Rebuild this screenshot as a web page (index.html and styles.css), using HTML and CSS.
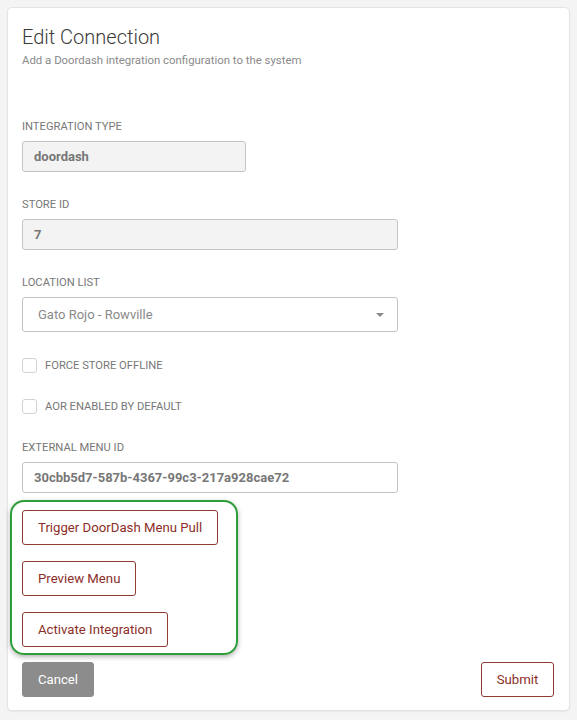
FILE: index.html
```html
<!DOCTYPE html>
<html>
<head>
<meta charset="utf-8">
<link rel="stylesheet" href="styles.css">
</head>
<body>
<div class="card">
  <h1 class="title">Edit Connection</h1>
  <p class="subtitle">Add a Doordash integration configuration to the system</p>

  <div class="field first">
    <label class="label">INTEGRATION TYPE</label>
    <div class="input readonly short">doordash</div>
  </div>

  <div class="field">
    <label class="label">STORE ID</label>
    <div class="input readonly">7</div>
  </div>

  <div class="field">
    <label class="label">LOCATION LIST</label>
    <div class="select"><span>Gato Rojo - Rowville</span><span class="caret"></span></div>
  </div>

  <div class="check"><span class="box"></span><span class="check-label">FORCE STORE OFFLINE</span></div>
  <div class="check"><span class="box"></span><span class="check-label">AOR ENABLED BY DEFAULT</span></div>

  <div class="field last">
    <label class="label">EXTERNAL MENU ID</label>
    <div class="input">30cbb5d7-587b-4367-99c3-217a928cae72</div>
  </div>

  <div class="highlight">
    <button class="btn-outline">Trigger DoorDash Menu Pull</button>
    <button class="btn-outline">Preview Menu</button>
    <button class="btn-outline">Activate Integration</button>
  </div>

  <div class="actions">
    <button class="btn-cancel">Cancel</button>
    <button class="btn-outline btn-submit">Submit</button>
  </div>
</div>
</body>
</html>
```

FILE: styles.css
```css
* { box-sizing: border-box; }
html, body { margin: 0; padding: 0; }
body {
  background: #f4f4f4;
  padding: 7px;
  font-family: Roboto, "Liberation Sans", Arial, sans-serif;
}
.card {
  width: 563px;
  height: 704px;
  background: #fff;
  border: 1px solid #e4e4e4;
  border-radius: 5px;
  box-shadow: 0 1px 2px rgba(0,0,0,0.06);
  padding: 17px 15px 15px 14px;
  display: flex;
  flex-direction: column;
}
.title {
  margin: 0;
  font-size: 20px;
  line-height: 24px;
  font-weight: 300;
  color: #3a3a3a;
}
.subtitle {
  margin: 4px 0 0 0;
  font-size: 11.4px;
  line-height: 14px;
  color: #8a8a8a;
}
.field { display: flex; flex-direction: column; margin-top: 26px; }
.field.first { margin-top: 53px; }
.field.last { margin-top: 27px; }
.label {
  font-size: 11.2px;
  line-height: 14px;
  color: #777;
  margin-bottom: 7px;
}
.input {
  width: 376px;
  height: 31px;
  border: 1px solid #c4c4c4;
  border-radius: 3px;
  padding: 0 11px;
  display: flex;
  align-items: center;
  font-size: 13px;
  font-weight: 700;
  color: #777;
  background: #fff;
}
.input.readonly { background: #f3f3f3; }
.input.short { width: 224px; }
.select {
  width: 376px;
  height: 35px;
  border: 1px solid #c4c4c4;
  border-radius: 3px;
  padding: 0 15px;
  display: flex;
  align-items: center;
  justify-content: space-between;
  font-size: 13px;
  color: #8a8a8a;
}
.caret {
  width: 0; height: 0;
  border-left: 4px solid transparent;
  border-right: 4px solid transparent;
  border-top: 4px solid #8a8a8a;
  margin-right: -2px;
}
.check {
  display: flex;
  align-items: center;
  gap: 8px;
  margin-top: 26px;
  height: 15px;
}
.box {
  width: 15px; height: 15px;
  border: 1.5px solid #d2d2d2;
  border-radius: 3px;
}
.check-label { font-size: 11.2px; color: #777; line-height: 14px; }
.highlight {
  margin: 7px 0 0 -12px;
  width: 228px;
  border: 2px solid #2e9e3a;
  border-radius: 14px;
  box-shadow: 0 2px 5px rgba(0,0,0,0.3);
  padding: 8px 10px 6px 10px;
  display: flex;
  flex-direction: column;
  align-items: flex-start;
  gap: 16px;
}
button {
  font-family: Roboto, "Liberation Sans", Arial, sans-serif;
  font-size: 13.2px;
  height: 35px;
  border-radius: 3px;
  padding: 0 15px;
  cursor: pointer;
}
.btn-outline {
  background: #fff;
  border: 1px solid #8e3b33;
  color: #8b2e28;
}
.actions {
  margin-top: 7px;
  display: flex;
  justify-content: space-between;
}
.btn-cancel {
  background: #8c8c8c;
  border: 1px solid #8c8c8c;
  color: #fff;
  width: 72px;
  padding: 0;
}
.btn-submit { width: 73px; padding: 0; }
```
